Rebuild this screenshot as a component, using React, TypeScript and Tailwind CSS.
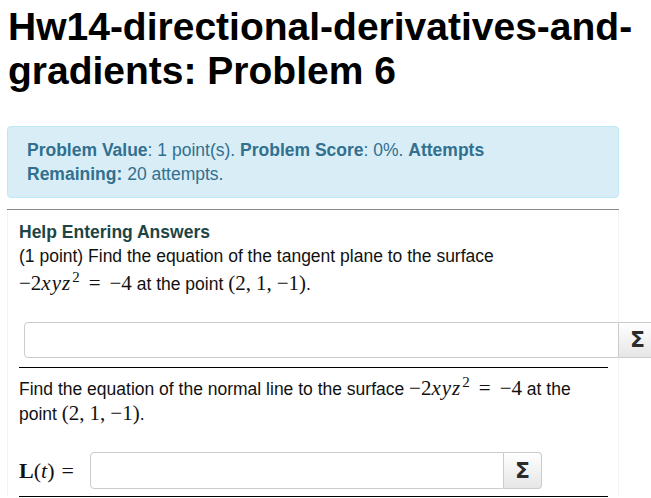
import React from "react";

const serif = "font-['Liberation_Serif','DejaVu_Serif',serif]";

function Eq() {
  return (
    <span className={`${serif} text-[21px] whitespace-nowrap`}>
      <span>−2</span>
      <i className="tracking-[1px]">xyz</i>
      <sup className="text-[15px] relative -top-[8px] ml-[1px]">2</sup>
      <span className="mx-[9px]">=</span>
      <span>−4</span>
    </span>
  );
}

function Pt() {
  return (
    <span className={`${serif} text-[21px] whitespace-nowrap`}>
      (2,<span className="ml-[5px]">1,</span>
      <span className="ml-[5px]">−1)</span>
    </span>
  );
}

function Sigma() {
  return (
    <span className="font-['DejaVu_Sans',sans-serif] font-bold text-[22px] leading-none text-[#2b2b2b]">Σ</span>
  );
}

export default function App() {
  return (
    <div className="w-[651px] h-[498px] overflow-hidden bg-white font-['Liberation_Sans',Arial,sans-serif]">
      <h2 className="ml-[8px] pt-[5px] text-[39px] leading-[44px] font-bold text-black">
        Hw14-directional-derivatives-and-
        <br />
        gradients: Problem 6
      </h2>

      <div className="ml-[7px] w-[612px] mt-[33px] rounded-[4px] border border-[#bce8f1] bg-[#d9edf7] px-[19px] py-[11px] text-[17.5px] leading-[24px] text-[#31708f]">
        <b>Problem Value</b>: 1 point(s). <b>Problem Score</b>: 0%. <b>Attempts</b>
        <br />
        <b>Remaining:</b> 20 attempts.
      </div>

      <div className="ml-[7px] w-[612px] mt-[11px] h-px bg-[#888]" />

      <div className="ml-[7px] w-[612px] border-x border-[#f3f3f3] pl-[11px] pt-[10px] text-[17.5px] leading-[24px] text-[#111]">
        <div className="font-bold text-[#1d4545]">Help Entering Answers</div>
        <div>(1 point) Find the equation of the tangent plane to the surface</div>
        <div className="leading-[30px]">
          <Eq /> at the point <Pt />.
        </div>

        <div className="mt-[23px] ml-[5px] flex h-[36px]">
          <div className="w-[595px] shrink-0 rounded-l-[4px] border border-[#ccc] bg-white" />
          <div className="w-[38px] shrink-0 flex items-center justify-center border border-l-0 border-[#ccc] bg-gradient-to-b from-white to-[#e6e6e6]">
            <Sigma />
          </div>
        </div>

        <div className="mt-[9px] w-[589px] h-px bg-black" />

        <div className="pt-[8px] whitespace-nowrap">
          Find the equation of the normal line to the surface <Eq /> at the
        </div>
        <div>
          point <Pt />.
        </div>

        <div className="mt-[26px] flex items-center h-[37px]">
          <span className={`${serif} text-[22px] w-[71px] shrink-0 whitespace-nowrap`}>
            <b>L</b>(<i>t</i>)<span className="ml-[7px]">=</span>
          </span>
          <div className="w-[414px] h-full shrink-0 rounded-l-[4px] border border-[#ccc] bg-white" />
          <div className="w-[38px] h-full shrink-0 flex items-center justify-center rounded-r-[4px] border border-l-0 border-[#ccc] bg-gradient-to-b from-white to-[#e6e6e6]">
            <Sigma />
          </div>
        </div>

        <div className="mt-[7px] w-[589px] h-px bg-black" />
      </div>
    </div>
  );
}
